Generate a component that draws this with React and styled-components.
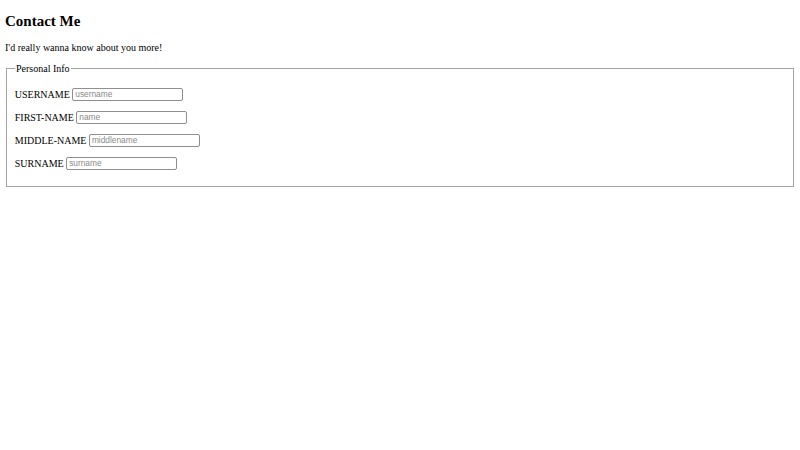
import React from 'react';
import styled, { createGlobalStyle } from 'styled-components';

// the reference is a plain HTML form shown at 0.625 scale, so default sizes are scaled down
const GlobalStyle = createGlobalStyle`
  body {
    margin: 5px;
    font-family: "Liberation Serif", "Times New Roman", serif;
    font-size: 10px;
    color: #000;
    background: #fff;
  }
`;

const Title = styled.h2`
  font-size: 15px;
  font-weight: bold;
  margin: 8px 0 12.45px;
`;

const Intro = styled.p`
  margin: 10px 0;
`;

const Fieldset = styled.fieldset`
  margin: 0 1.25px;
  padding: 3.5px 7.5px 6.25px;
  border: 1px solid #a3a3a3;
  min-inline-size: min-content;
`;

const Legend = styled.legend`
  padding: 0 1.25px;
`;

const Row = styled.p`
  margin: 10px 0;
`;

const Input = styled.input`
  box-sizing: border-box;
  width: 111px;
  height: 13px;
  padding: 1px 2px;
  border: 1px solid #8f8f8f;
  border-radius: 2px;
  font-family: "Liberation Sans", Arial, sans-serif;
  font-size: 8.33px;
  vertical-align: baseline;

  &::placeholder {
    color: #8a8a8a;
  }
`;

const fields = [
  { label: 'USERNAME', name: 'username', placeholder: 'username' },
  { label: 'FIRST-NAME', name: 'firstname', placeholder: 'name' },
  { label: 'MIDDLE-NAME', name: 'middlename', placeholder: 'middlename' },
  { label: 'SURNAME', name: 'surname', placeholder: 'surname' },
];

const App = () => {
  return (
    <>
      <GlobalStyle />
      <Title>Contact Me</Title>
      <Intro>I'd really wanna know about you more!</Intro>
      <form>
        <Fieldset>
          <Legend>Personal Info</Legend>
          {fields.map((f) => (
            <Row key={f.name}>
              <label htmlFor={f.name}>{f.label}</label>{' '}
              <Input type="text" id={f.name} name={f.name} placeholder={f.placeholder} />
            </Row>
          ))}
        </Fieldset>
      </form>
    </>
  );
};

export default App;
